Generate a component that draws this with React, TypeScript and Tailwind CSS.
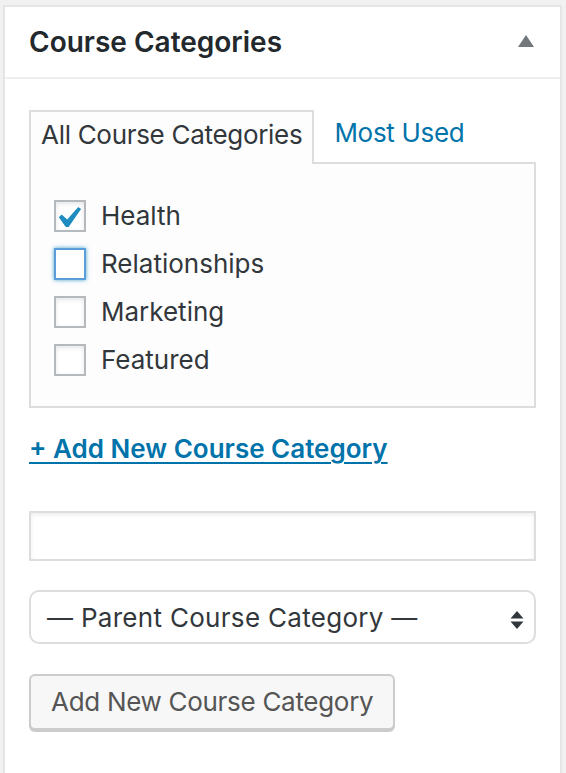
const categories = [
  { name: 'Health', checked: true },
  { name: 'Relationships', focused: true },
  { name: 'Marketing' },
  { name: 'Featured' },
]

function Checkbox({ checked, focused }: { checked?: boolean; focused?: boolean }) {
  return (
    <span
      className={`flex h-[32px] w-[32px] shrink-0 items-center justify-center bg-white border-2 ${
        focused
          ? 'border-[#5b9dd9] shadow-[0_0_4px_rgba(30,140,190,0.8)]'
          : 'border-[#b4b9be] shadow-[inset_0_2px_4px_rgba(0,0,0,0.1)]'
      }`}
    >
      {checked && (
        <svg width="24" height="22" viewBox="5.4 4.6 11.2 10" className="mt-[1px]">
          <path d="M14.83 4.89l1.34.94-5.81 8.38H9.02L5.78 9.67l1.34-1.25 2.57 2.4z" fill="#1e8cbe" />
        </svg>
      )}
    </span>
  )
}

export default function App() {
  return (
    <div
      className="min-h-[773px] bg-[#f1f1f1] pt-[5px] pl-[3px] pr-[4px] text-[#32373c]"
      style={{ fontFamily: 'Inter, "Noto Sans", sans-serif' }}
    >
      <div className="min-h-[768px] border-2 border-b-0 border-[#e5e5e5] bg-white">
        {/* Header */}
        <div className="flex h-[72px] items-center justify-between border-b-2 border-[#eee] pl-[24px] pr-[26px]">
          <h2 className="text-[28px] font-semibold leading-none text-[#23282d]">
            Course Categories
          </h2>
          <svg width="16" height="12" viewBox="0 0 16 12" className="mb-[2px]">
            <path d="M8 0L16 12H0z" fill="#72777c" />
          </svg>
        </div>

        <div className="px-[24px] pt-[31px]">
          {/* Tabs */}
          <ul className="flex items-end">
            <li className="relative -mb-[2px] h-[54px] border-2 border-b-0 border-[#ddd] bg-[#fdfdfd] px-[10px] pt-[7px] text-[26px] leading-[32px] tracking-[-0.3px] text-[#32373c]">
              All Course Categories
            </li>
            <li className="ml-[10px] h-[52px] px-[10px] pt-[7px] text-[26px] leading-[32px] tracking-[-0.3px] text-[#0073aa]">
              Most Used
            </li>
          </ul>

          {/* Panel */}
          <div className="h-[246px] border-2 border-[#ddd] bg-[#fdfdfd] pl-[23px] pt-[28px]">
            <ul className="flex flex-col">
              {categories.map(c => (
                <li key={c.name} className="flex h-[48px] items-center gap-[15px] text-[26px] text-[#32373c]">
                  <Checkbox checked={c.checked} focused={c.focused} />
                  <span className="leading-none">{c.name}</span>
                </li>
              ))}
            </ul>
          </div>

          {/* Adder */}
          <div className="mt-[26px] text-[26px] font-semibold leading-[30px] text-[#0073aa] underline underline-offset-[4px] decoration-2">
            + Add New Course Category
          </div>

          <div className="mt-[47px] h-[50px] border-2 border-[#ddd] bg-white shadow-[inset_0_2px_4px_rgba(0,0,0,0.07)]" />

          <div className="relative mt-[29px] flex h-[54px] items-center rounded-[10px] border-2 border-[#ddd] bg-white pl-[16px] text-[26px] tracking-[0.3px] text-[#32373c]">
            <span>— Parent Course Category —</span>
            <svg width="14" height="18" viewBox="0 0 14 18" className="absolute right-[10px] top-[19px]">
              <path d="M7 0L13.5 7.5H0.5z M7 18L0.5 10.5H13.5z" fill="#32373c" />
            </svg>
          </div>

          <button className="mt-[30px] h-[56px] rounded-[6px] border-2 border-[#ccc] bg-[#f7f7f7] px-[20px] pb-[2px] text-[26px] tracking-[-0.3px] text-[#555] shadow-[0_2px_0_#ccc]">
            Add New Course Category
          </button>
        </div>
      </div>
    </div>
  )
}
